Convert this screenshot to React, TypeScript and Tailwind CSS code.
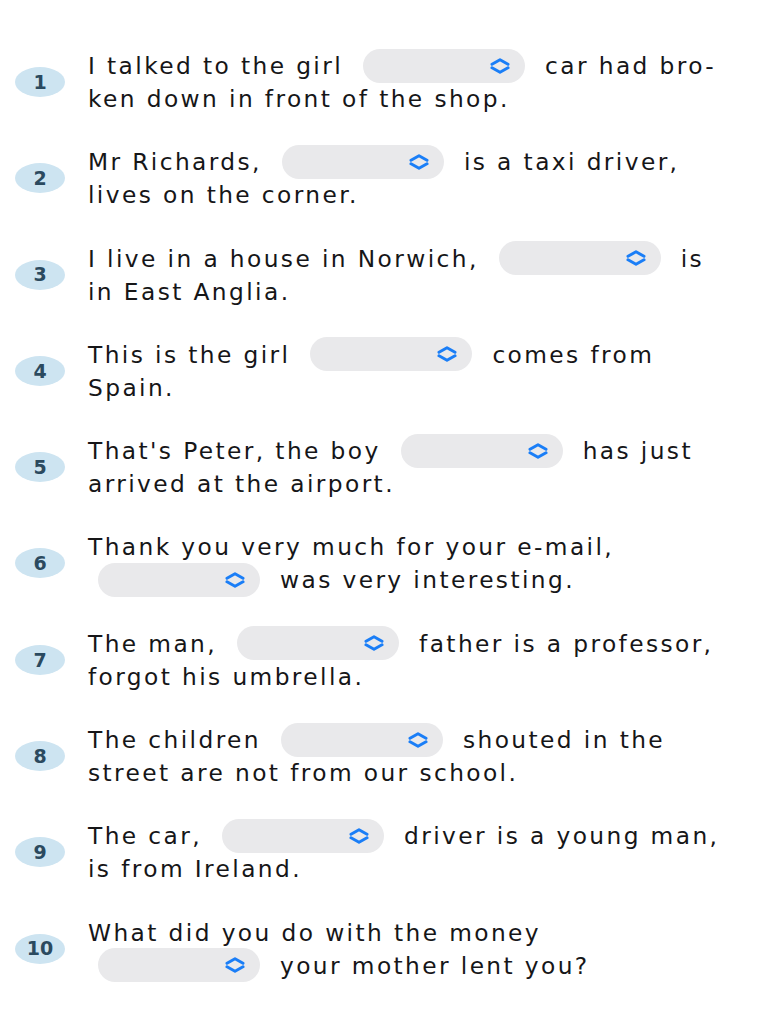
import React from 'react';

type Seg = string | { sel: true; first?: boolean };

const S: Seg = { sel: true };
const SF: Seg = { sel: true, first: true };

const items: Seg[][][] = [
  [['I talked to the girl', S, 'car had bro-'], ['ken down in front of the shop.']],
  [['Mr Richards,', S, 'is a taxi driver,'], ['lives on the corner.']],
  [['I live in a house in Norwich,', S, 'is'], ['in East Anglia.']],
  [['This is the girl', S, 'comes from'], ['Spain.']],
  [["That's Peter, the boy", S, 'has just'], ['arrived at the airport.']],
  [['Thank you very much for your e-mail,'], [SF, 'was very interesting.']],
  [['The man,', S, 'father is a professor,'], ['forgot his umbrella.']],
  [['The children', S, 'shouted in the'], ['street are not from our school.']],
  [['The car,', S, 'driver is a young man,'], ['is from Ireland.']],
  [['What did you do with the money'], [SF, 'your mother lent you?']],
];

function Select({ first }: { first?: boolean }) {
  return (
    <span
      className={`inline-flex align-middle items-center justify-end h-[34px] w-[162px] rounded-full bg-[#e9e9eb] pr-[15px] ${
        first ? 'ml-[10px] mr-[20px]' : 'mx-[20px]'
      }`}
    >
      <svg width="20" height="16" viewBox="0 0 20 16" fill="none">
        <path d="M2 6.2 L10 1.8 L18 6.2" stroke="#1a7ef7" strokeWidth="3" strokeLinecap="round" strokeLinejoin="round" />
        <path d="M2 9.8 L10 14.2 L18 9.8" stroke="#1a7ef7" strokeWidth="3" strokeLinecap="round" strokeLinejoin="round" />
      </svg>
    </span>
  );
}

export default function App() {
  return (
    <div
      className="w-[768px] h-[1024px] bg-white pt-[49px] pl-[15px] text-[#161618]"
      style={{ fontFamily: '"DejaVu Sans", sans-serif' }}
    >
      <div className="flex flex-col gap-[30.3px]">
        {items.map((lines, i) => (
          <div key={i} className="flex items-center">
            <div className="w-[50px] h-[30px] rounded-[50%] bg-[#cde4f1] flex items-center justify-center text-[19px] font-bold text-[#2b4a5f] shrink-0">
              {i + 1}
            </div>
            <div className="ml-[23px] text-[23.3px] leading-[33px] tracking-[2.4px]">
              {lines.map((line, j) => (
                <div key={j} className="whitespace-nowrap h-[33px] flex items-center">
                  {line.map((seg, k) =>
                    typeof seg === 'string' ? (
                      <span key={k}>{seg}</span>
                    ) : (
                      <Select key={k} first={seg.first} />
                    )
                  )}
                </div>
              ))}
            </div>
          </div>
        ))}
      </div>
    </div>
  );
}
